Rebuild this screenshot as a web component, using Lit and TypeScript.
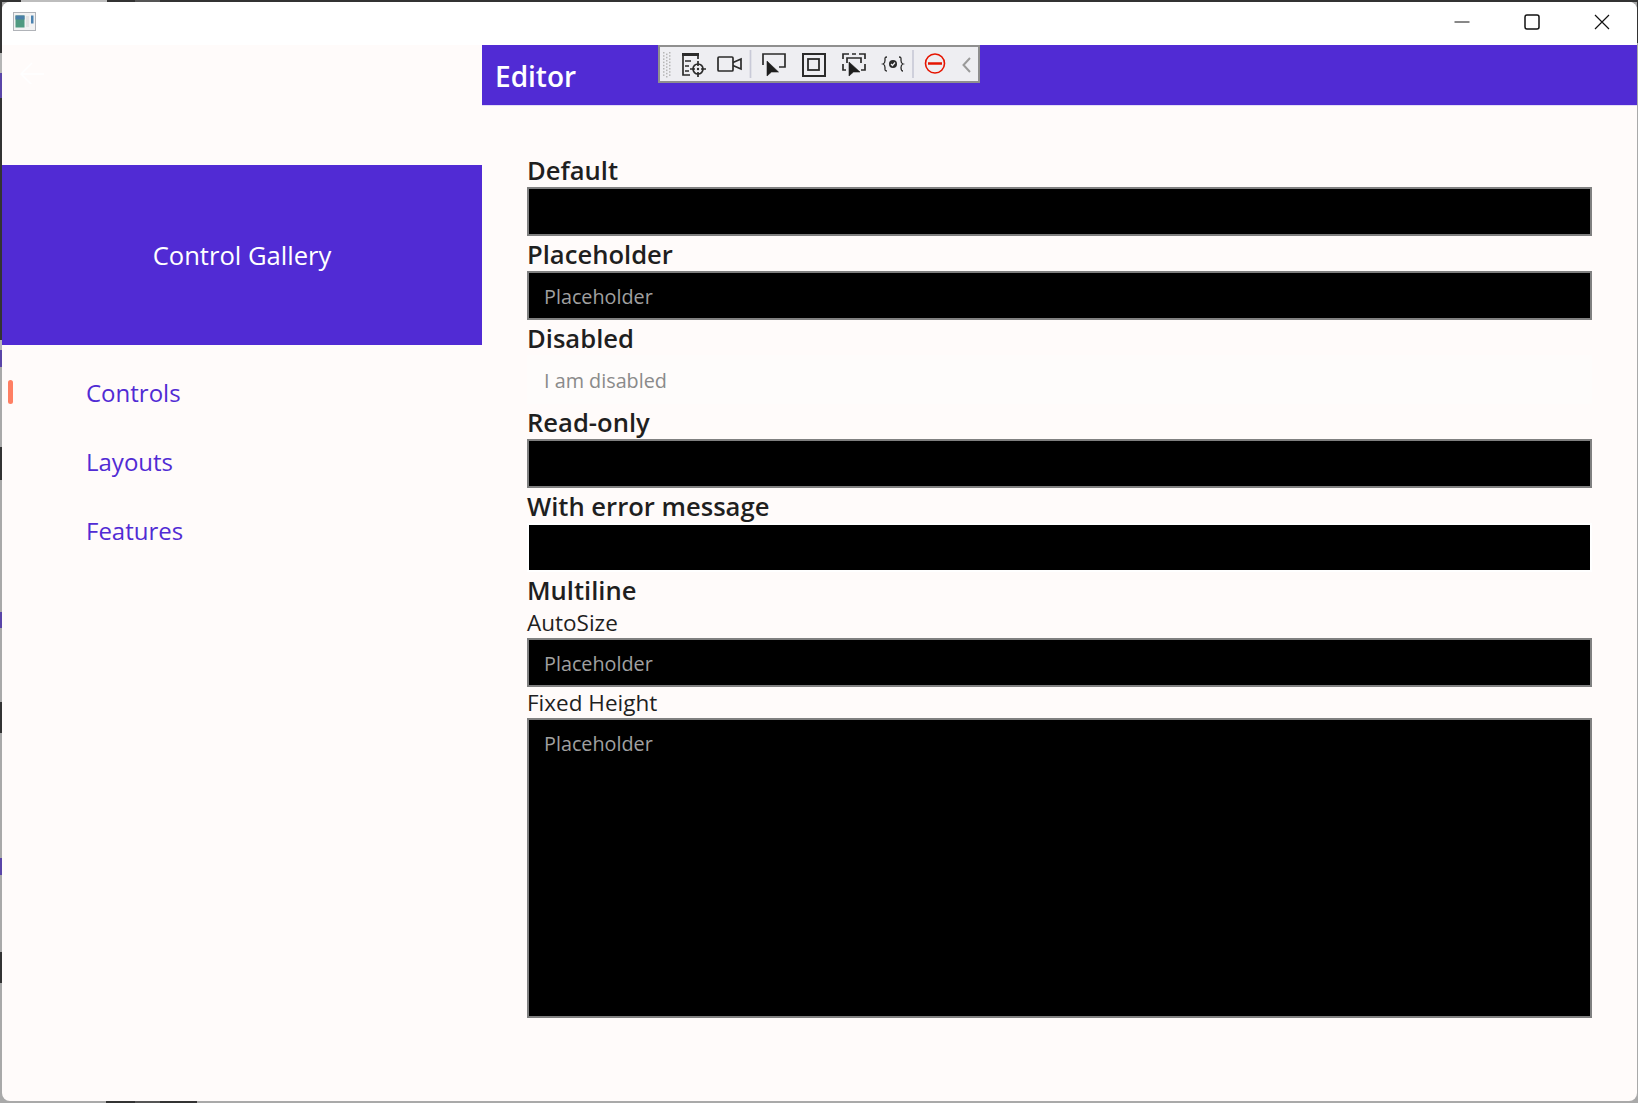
import { LitElement, html, css, svg } from "lit";
import { customElement } from "lit/decorators.js";

const FONT = css`"Open Sans", "Noto Sans", sans-serif`;

@customElement("app-root")
export class AppRoot extends LitElement {
  static styles = css`
    :host {
      display: block;
      width: 1638px;
      height: 1103px;
      box-sizing: border-box;
      padding: 2px 1px 2px 2px;
      overflow: hidden;
      font-family: ${FONT};
      background-color: #a9a9a9;
      background-image:
        linear-gradient(90deg, #333 0 21px, #bdbdbd 21px 107px, #333 107px 135px, #555 135px 160px, #333 160px),
        linear-gradient(90deg, #a9a9a9 0 106px, #333 106px 135px, #555 135px 160px, #333 160px 197px, #a9a9a9 197px),
        linear-gradient(180deg, #333 0 53px, #b5b5b5 53px 73px, #5a45a8 73px 98px, #333 98px 340px, #b5b5b5 340px 350px, #5a45a8 350px 367px, #a9a9a9 367px 447px, #333 447px 480px, #a9a9a9 480px 612px, #5a45a8 612px 628px, #a9a9a9 628px 702px, #333 702px 733px, #a9a9a9 733px 858px, #5a45a8 858px 875px, #a9a9a9 875px 952px, #333 952px 983px, #a9a9a9 983px),
        linear-gradient(180deg, #333 0 43px, #a9a9a9 43px);
      background-size: 100% 2px, 100% 2px, 2px 100%, 1px 100%;
      background-position: 0 0, 0 100%, 0 0, 100% 0;
      background-repeat: no-repeat;
    }
    .window {
      height: 100%;
      border-radius: 8px;
      overflow: hidden;
      background: #fffbfa;
      display: flex;
      flex-direction: column;
    }
    .titlebar {
      flex: 0 0 43px;
      background: #fff;
      display: flex;
      align-items: center;
      justify-content: space-between;
    }
    .appicon { margin-left: 11px; margin-top: -4px; display: block; }
    .caption { display: flex; align-items: center; margin-top: -3px; }
    .capbtn { width: 70px; display: flex; justify-content: center; }
    .capbtn svg { display: block; }
    .body { flex: 1; display: flex; min-height: 0; }
    .drawer { flex: 0 0 480px; display: flex; flex-direction: column; }
    .backrow { height: 120px; padding: 13px 0 0 18px; box-sizing: border-box; }
    .backrow svg { display: block; }
    .banner {
      height: 180px;
      background: #512bd4;
      color: #fff;
      font-size: 25.6px;
      display: flex;
      align-items: center;
      justify-content: center;
    }
    .nav { display: flex; flex-direction: column; padding-top: 13px; }
    .nav-item {
      height: 69px;
      display: flex;
      align-items: center;
      color: #512bd4;
      font-size: 24px;
      padding-left: 84px;
      position: relative;
    }
    .marker {
      position: absolute;
      left: 6px;
      top: 22px;
      width: 5px;
      height: 24px;
      border-radius: 3px;
      background: #ff7f63;
    }
    .main { flex: 1; display: flex; flex-direction: column; min-width: 0; position: relative; }
    .header {
      flex: 0 0 auto;
      height: 60px;
      box-sizing: content-box;
      background: #512bd4;
      color: #fff;
      font-size: 28px;
      font-weight: 600;
      padding-left: 13px;
      display: flex;
      align-items: center;
      border-bottom: 1px solid #e3dcf6;
    }
    .header span { position: relative; top: 1px; }
    .toolbar {
      position: absolute;
      left: 176px;
      top: 0;
      width: 322px;
      height: 38px;
      box-sizing: border-box;
      background: #eeeef2;
      border: 2px solid #8f8f8f;
      display: flex;
      align-items: center;
    }
    .toolbar svg { display: block; }
    .content {
      flex: 1;
      padding: 46px 45px 0 45px;
      display: flex;
      flex-direction: column;
    }
    .label {
      height: 35px;
      font-size: 25.6px;
      font-weight: 550;
      line-height: 37px;
      color: #1f1f1f;
    }
    .sublabel {
      height: 31px;
      font-size: 22.5px;
      line-height: 31px;
      color: #1f1f1f;
    }
    .field {
      height: 49px;
      box-sizing: border-box;
      background: #000;
      border: 2px solid #808080;
      font-size: 19.8px;
      color: #a0a0a0;
      padding-left: 15px;
      display: flex;
      align-items: center;
    }
    .field.disabled {
      background: #fefcfb;
      border-color: #fefcfb;
      color: #8a8a8a;
    }
    .field.error { border-color: #fff; }
    .field.tall { height: 300px; align-items: flex-start; padding-top: 9px; }
    .field span { position: relative; top: 1px; }
  `;

  toolbarIcons() {
    const grip = [0, 1, 2, 3, 4, 5, 6, 7];
    return svg`
      <g fill="none" stroke="#2b2b2b" stroke-width="1.7">
        <g fill="#b5b5b5" stroke="none">
          ${grip.map(
            (i) => svg`<rect x="3" y="${5 + i * 3.2}" width="1.5" height="1.5"/><rect x="6" y="${6.6 + i * 3.2}" width="1.5" height="1.5"/><rect x="9" y="${5 + i * 3.2}" width="1.5" height="1.5"/>`
          )}
        </g>
        <rect x="22" y="6" width="17" height="3" fill="#2b2b2b" stroke="none" />
        <path d="M23 8v20h7M38 8v4" />
        <path d="M25 14h6M25 19h4M25 24h4" />
        <circle cx="38" cy="22" r="5" />
        <path d="M38 14v5M38 25v5M30 22h5M41 22h5" />
        <circle cx="38" cy="22" r="1.200" fill="#2b2b2b" stroke="none" />
        <rect x="58" y="10" width="15" height="14" rx="1" />
        <path d="M73 15.500l8-3.500v10l-8-3.500" />
        <path d="M90.500 3v28" stroke="#c9cad8" />
        <path d="M103 18v-11h22v13h-6" />
        <path d="M107 14v15l4.500-4 7 0z" fill="#1e1e1e" stroke="#1e1e1e" stroke-width="0.600" />
        <rect x="143" y="7" width="22" height="22" stroke-width="2" />
        <rect x="148" y="12" width="11" height="11" stroke-width="1.800" />
        <path d="M183 12v-5h6M199 7h6v5M183 17v6h3M205 17v6h-4M192 7h4" />
        <path d="M187 16v-5h14v5" />
        <path d="M189 15v14l4.500-4 6.500 0z" fill="#1e1e1e" stroke="#1e1e1e" stroke-width="0.600" />
        <path d="M227 10c-2.500 0-2 1.500-2 3.500s-.5 3-2 3.500c1.500.5 2 1.500 2 3.500s-.5 3.500 2 3.500M239 10c2.500 0 2 1.500 2 3.500s.5 3 2 3.500c-1.500.5-2 1.500-2 3.500s.5 3.500 2 3.500" stroke-width="1.300" />
        <circle cx="233" cy="17" r="4" fill="#2b2b2b" stroke="none" />
        <path d="M231 17l1.500 1.500 2.500-3" stroke="#eeeef2" stroke-width="1.200" />
        <path d="M253 3v28" stroke="#c9cad8" />
        <circle cx="275" cy="16.500" r="9.500" stroke="#e51400" stroke-width="1.600" />
        <path d="M268 16.500h14" stroke="#e51400" stroke-width="2.600" />
        <path d="M310 11l-6.500 7 6.500 7" stroke="#9a9a9a" stroke-width="2" />
      </g>
    `;
  }

  render() {
    return html`
      <div class="window">
        <div class="titlebar">
          <svg class="appicon" width="24" height="20" viewBox="0 0 24 20">
            <rect x="0.500" y="0.500" width="22" height="18" fill="#f2f2f2" stroke="#b0b3b8" />
            <rect x="2.500" y="3.500" width="9" height="12" fill="#4f9a80" />
            <rect x="2.500" y="3.500" width="9" height="4" fill="#4a7fa8" />
            <rect x="13" y="4" width="3" height="11" fill="#e2e2e2" />
            <rect x="18" y="3.500" width="2.500" height="8" fill="#4a82b0" />
          </svg>
          <div class="caption">
            <div class="capbtn">
              <svg width="16" height="16" viewBox="0 0 16 16"><path d="M0.500 8h15" stroke="#111" stroke-width="1" /></svg>
            </div>
            <div class="capbtn">
              <svg width="16" height="16" viewBox="0 0 16 16"><rect x="1" y="1" width="14" height="14" rx="2" fill="none" stroke="#111" stroke-width="1.500" /></svg>
            </div>
            <div class="capbtn">
              <svg width="16" height="16" viewBox="0 0 16 16"><path d="M1 1l14 14M15 1L1 15" stroke="#111" stroke-width="1.200" /></svg>
            </div>
          </div>
        </div>
        <div class="body">
          <div class="drawer">
            <div class="backrow">
              <svg width="26" height="26" viewBox="0 0 26 26" fill="none" stroke="#fff" stroke-width="1.500">
                <path d="M1 16h23M12 5L1 16l11 11" />
              </svg>
            </div>
            <div class="banner">Control Gallery</div>
            <div class="nav">
              <div class="nav-item"><span class="marker"></span>Controls</div>
              <div class="nav-item">Layouts</div>
              <div class="nav-item">Features</div>
            </div>
          </div>
          <div class="main">
            <div class="header"><span>Editor</span></div>
            <div class="toolbar">
              <svg width="318" height="34" viewBox="0 0 318 34">${this.toolbarIcons()}</svg>
            </div>
            <div class="content">
              <div class="label">Default</div>
              <div class="field"></div>
              <div class="label">Placeholder</div>
              <div class="field"><span>Placeholder</span></div>
              <div class="label">Disabled</div>
              <div class="field disabled"><span>I am disabled</span></div>
              <div class="label">Read-only</div>
              <div class="field"></div>
              <div class="label">With error message</div>
              <div class="field error"></div>
              <div class="label">Multiline</div>
              <div class="sublabel">AutoSize</div>
              <div class="field"><span>Placeholder</span></div>
              <div class="sublabel">Fixed Height</div>
              <div class="field tall"><span>Placeholder</span></div>
            </div>
          </div>
        </div>
      </div>
    `;
  }
}
